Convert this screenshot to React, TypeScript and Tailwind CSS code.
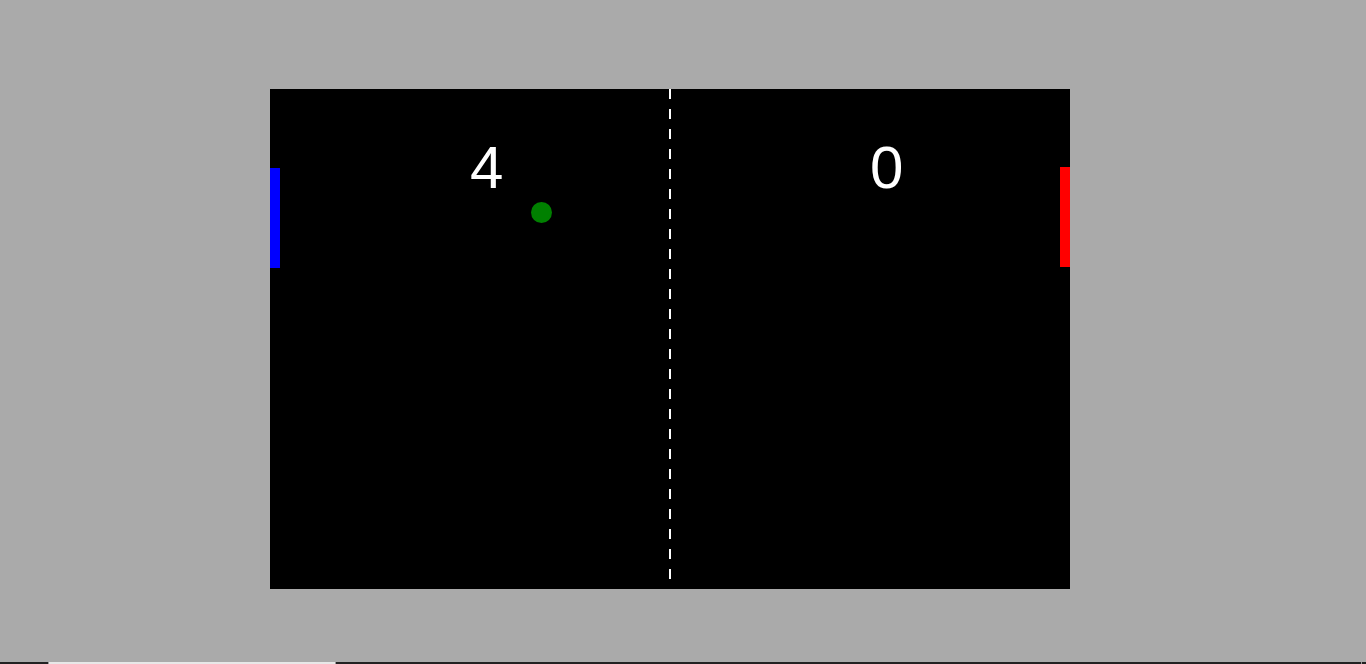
export default function App() {
  const leftScore = 4;
  const rightScore = 0;

  return (
    <div className="flex flex-col h-[664px] w-full bg-[#aaaaaa] overflow-hidden" style={{ fontFamily: '"Liberation Sans", Arial, sans-serif' }}>
      {/* GAME AREA */}
      <div className="flex-1 pt-[89px] pl-[270px]">
        <div className="relative w-[800px] h-[500px] bg-black">
          {/* net */}
          <svg className="absolute left-[399px] top-0" width="2" height="500">
            <line x1="1" y1="0" x2="1" y2="490" stroke="white" strokeWidth="2" strokeDasharray="10 10" />
          </svg>

          {/* scores */}
          <span className="absolute left-[200px] top-[49px] text-[60px] leading-[60px] text-white">{leftScore}</span>
          <span className="absolute left-[600px] top-[49px] text-[60px] leading-[60px] text-white">{rightScore}</span>

          {/* paddles */}
          <div className="absolute left-0 top-[79px] w-[10px] h-[100px] bg-[#0000ff]" />
          <div className="absolute right-0 top-[78px] w-[10px] h-[100px] bg-[#ff0000]" />

          {/* ball */}
          <div className="absolute left-[261px] top-[113px] w-[21px] h-[21px] rounded-full bg-[#008000]" />
        </div>
      </div>

      {/* scrollbar strip */}
      <div className="flex h-[2px] bg-[#222222]">
        <div className="ml-[48px] w-[288px] h-[2px] bg-[#e8e8e8] border-x border-[#999]" />
        <div className="flex-1" />
        <div className="w-[1px] mr-[4px] bg-[#999]" />
      </div>
    </div>
  );
}
